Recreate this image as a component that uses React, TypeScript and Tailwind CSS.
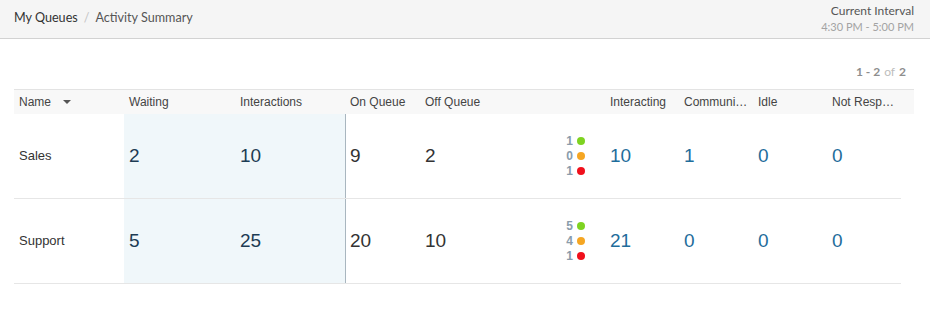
const COLS = "grid grid-cols-[110px_111px_111px_74px_125px_60px_74px_74px_74px_1fr]"

interface QueueRow {
  name: string
  waiting: number
  interactions: number
  onQueue: number
  offQueue: number
  status: [number, number, number]
  interacting: number
  communicating: number
  idle: number
  notResponding: number
}

const rows: QueueRow[] = [
  {
    name: "Sales",
    waiting: 2,
    interactions: 10,
    onQueue: 9,
    offQueue: 2,
    status: [1, 0, 1],
    interacting: 10,
    communicating: 1,
    idle: 0,
    notResponding: 0,
  },
  {
    name: "Support",
    waiting: 5,
    interactions: 25,
    onQueue: 20,
    offQueue: 10,
    status: [5, 4, 1],
    interacting: 21,
    communicating: 0,
    idle: 0,
    notResponding: 0,
  },
]

function StatusDots({ counts }: { counts: [number, number, number] }) {
  const colors = ["bg-[#7ed321]", "bg-[#f5a623]", "bg-[#f0101c]"]
  return (
    <div className="flex flex-col items-end justify-center pr-[20px]">
      {counts.map((c, i) => (
        <div key={i} className="flex h-[15px] items-center">
          <span className="text-[12px] font-bold text-[#8a9cab]">{c}</span>
          <span className={`ml-[4px] h-[8px] w-[8px] rounded-full ${colors[i]}`} />
        </div>
      ))}
    </div>
  )
}

export default function App() {
  return (
    <div className="h-[333px] w-[930px] bg-white font-['Liberation_Sans',Arial,sans-serif]">
      <header className="flex h-[39px] items-start justify-between border-b border-[#d2d2d2] bg-[#f5f5f5] pl-[14px] pr-[16px] font-['Lato',sans-serif]">
        <div className="flex h-[36px] items-center text-[12.6px]">
          <span className="text-[#333]">My Queues</span>
          <span className="mx-[6px] text-[#c4c4c4]">/</span>
          <span className="text-[#555]">Activity Summary</span>
        </div>
        <div className="flex flex-col items-end pt-[3px]">
          <span className="text-[12px] leading-[16px] text-[#555]">Current Interval</span>
          <span className="text-[11px] leading-[16px] text-[#a3a3a3]">4:30 PM - 5:00 PM</span>
        </div>
      </header>

      <div className="mt-[25px] flex justify-end pr-[24px] font-['Lato',sans-serif] text-[12px] font-bold leading-[16px] text-[#8e8e8e]">
        <span>1 - 2</span>
        <span className="mx-[4px] font-normal text-[#bdbdbd]">of</span>
        <span>2</span>
      </div>

      <div className="ml-[14px] mt-[9px] w-[900px]">
        <div className={`${COLS} h-[25px] items-center border-t border-[#e3e3e3] bg-[#f8f8f8] text-[12px] text-[#444]`}>
          <div className="flex items-center pl-[5px]">
            Name
            <span className="ml-[12px] h-0 w-0 border-x-[4px] border-t-[4px] border-x-transparent border-t-[#555]" />
          </div>
          <div className="pl-[5px]">Waiting</div>
          <div className="pl-[5px]">Interactions</div>
          <div className="pl-[4px]">On Queue</div>
          <div className="pl-[5px]">Off Queue</div>
          <div />
          <div className="pl-[5px]">Interacting</div>
          <div className="pl-[5px]">Communi…</div>
          <div className="pl-[5px]">Idle</div>
          <div className="pl-[5px]">Not Resp…</div>
        </div>

        {rows.map((r) => (
          <div key={r.name} className={`${COLS} mr-[13px] h-[85px] border-b border-[#e6e6e6] text-[19px]`}>
            <div className="flex items-center pl-[5px] text-[13px] text-[#333]">{r.name}</div>
            <div className="flex items-center bg-[#f0f7fa] pl-[5px] text-[#1d3c54]">{r.waiting}</div>
            <div className="flex items-center border-r border-[#a9b6bf] bg-[#f0f7fa] pl-[5px] text-[#1d3c54]">
              {r.interactions}
            </div>
            <div className="flex items-center pl-[4px] text-[#333]">{r.onQueue}</div>
            <div className="flex items-center pl-[5px] text-[#333]">{r.offQueue}</div>
            <StatusDots counts={r.status} />
            <div className="flex items-center pl-[5px] text-[#1f6d9b]">{r.interacting}</div>
            <div className="flex items-center pl-[5px] text-[#1f6d9b]">{r.communicating}</div>
            <div className="flex items-center pl-[5px] text-[#1f6d9b]">{r.idle}</div>
            <div className="flex items-center pl-[5px] text-[#1f6d9b]">{r.notResponding}</div>
          </div>
        ))}
      </div>
    </div>
  )
}
